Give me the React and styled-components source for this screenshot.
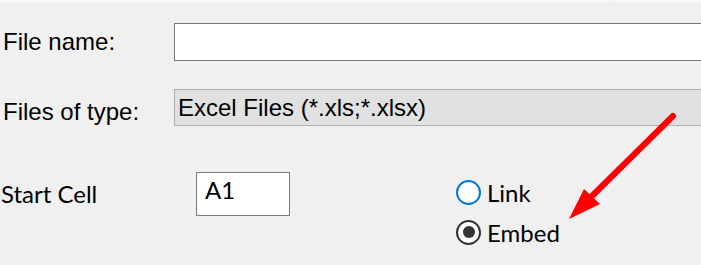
import React from "react"
import styled, { createGlobalStyle } from "styled-components"

const GlobalStyle = createGlobalStyle`
  html, body {
    margin: 0;
    padding: 0;
    background: #f0f0f0;
    overflow: hidden;
  }
  #root {
    width: 701px;
    height: 265px;
  }
`

const App = () => {
  return (
    <>
      <GlobalStyle />
      <Dialog>
        <TopStrip>
          <StripMark />
        </TopStrip>

        <FieldRow top={21}>
          <Label>File name:</Label>
          <TextBox />
        </FieldRow>

        <FieldRow top={28}>
          <Label shift={8}>Files of type:</Label>
          <Combo>Excel Files (*.xls;*.xlsx)</Combo>
        </FieldRow>

        <CellRow>
          <CellLabel>Start Cell</CellLabel>
          <CellBox>A1</CellBox>
          <RadioGroup>
            <RadioRow>
              <Radio />
              <RadioText>Link</RadioText>
            </RadioRow>
            <RadioRow>
              <Radio checked />
              <RadioText>Embed</RadioText>
            </RadioRow>
          </RadioGroup>
        </CellRow>

        <Arrow width="701" height="265" viewBox="0 0 701 265">
          <line x1="673" y1="116" x2="590" y2="198" stroke="#ff0000" strokeWidth="6" strokeLinecap="round" />
          <polygon points="569,219 584,189 600,204" fill="#ff0000" />
        </Arrow>
      </Dialog>
    </>
  )
}

export default App

const Dialog = styled.div`
  position: relative;
  width: 701px;
  height: 265px;
  display: flex;
  flex-direction: column;
  background: #f0f0f0;
  overflow: hidden;
`

const TopStrip = styled.div`
  height: 2px;
  background: #f8f8f8;
  display: flex;
`

const StripMark = styled.span`
  margin-left: 610px;
  width: 1px;
  background: #dfe4fb;
`

const FieldRow = styled.div`
  display: flex;
  align-items: center;
  margin-top: ${({ top }) => top}px;
`

const Label = styled.div`
  width: 171px;
  padding-left: 3px;
  font-family: "Liberation Sans", Arial, sans-serif;
  font-size: 24px;
  line-height: 28px;
  color: #000;
  margin-top: ${({ shift }) => shift || 0}px;
`

const TextBox = styled.div`
  flex: 1;
  height: 38px;
  box-sizing: border-box;
  background: #fff;
  border: 1px solid #7a7a7a;
  border-right: none;
`

const Combo = styled.div`
  flex: 1;
  height: 37px;
  box-sizing: border-box;
  display: flex;
  align-items: center;
  padding-left: 3px;
  background: #e1e1e1;
  border: 1px solid #adadad;
  border-right: none;
  font-family: "Liberation Sans", Arial, sans-serif;
  font-size: 24px;
  line-height: 28px;
  color: #000;
  white-space: nowrap;
`

const CellRow = styled.div`
  display: flex;
  align-items: flex-start;
  margin-top: 46px;
`

const CellLabel = styled.div`
  width: 195px;
  padding-left: 1px;
  margin-top: 7px;
  font-family: Lato, "Open Sans", sans-serif;
  font-size: 24px;
  line-height: 29px;
  color: #000;
`

const CellBox = styled.div`
  width: 94px;
  height: 44px;
  box-sizing: border-box;
  padding: 2px 0 0 8px;
  background: #fff;
  border: 1px solid #7a7a7a;
  font-family: Lato, "Open Sans", sans-serif;
  font-size: 24px;
  line-height: 29px;
  color: #000;
`

const RadioGroup = styled.div`
  display: flex;
  flex-direction: column;
  margin-left: 166px;
`

const RadioRow = styled.div`
  display: flex;
  align-items: center;
  height: 40px;
  gap: 6px;
`

const Radio = styled.span`
  width: 25px;
  height: 25px;
  box-sizing: border-box;
  border-radius: 50%;
  border: 2px solid ${({ checked }) => (checked ? "#333" : "#0078d7")};
  background: #fff;
  display: flex;
  align-items: center;
  justify-content: center;

  &::after {
    content: "";
    display: ${({ checked }) => (checked ? "block" : "none")};
    width: 12px;
    height: 12px;
    border-radius: 50%;
    background: #333;
  }
`

const RadioText = styled.span`
  font-family: Lato, "Open Sans", sans-serif;
  font-size: 24px;
  line-height: 29px;
  color: #000;
`

const Arrow = styled.svg`
  position: absolute;
  left: 0;
  top: 0;
  pointer-events: none;
`
